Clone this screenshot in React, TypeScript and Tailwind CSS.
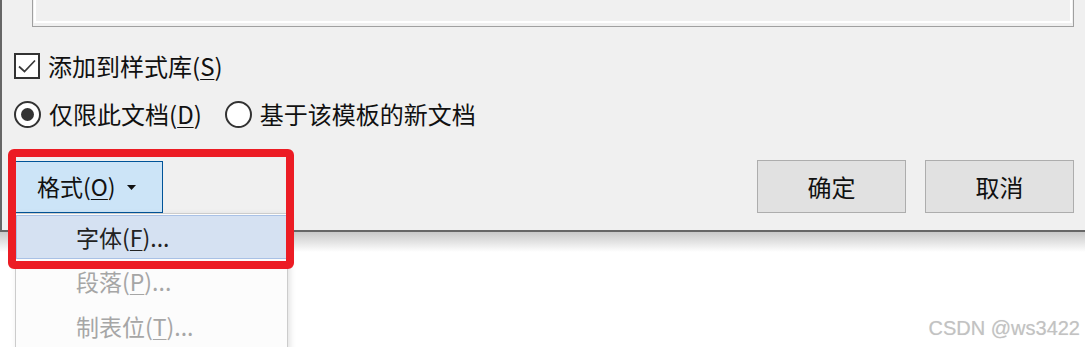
import React from "react";

const FONT = "font-['Noto_Sans_CJK_SC','Noto_Sans',sans-serif]";

function Mn({ c }: { c: string }) {
  return <span className="underline underline-offset-[3px] decoration-1">{c}</span>;
}

function CheckBox() {
  return (
    <span className="w-[26px] h-[26px] border-2 border-[#333333] bg-white flex items-center justify-center">
      <svg width="20" height="16" viewBox="0 0 20 16">
        <path d="M2 8.5 L7.5 13.5 L18 2.5" fill="none" stroke="#3a3a3a" strokeWidth="1.7" />
      </svg>
    </span>
  );
}

function Radio({ on }: { on?: boolean }) {
  return (
    <span className="w-[27px] h-[27px] rounded-full border-2 border-[#333333] bg-white flex items-center justify-center">
      {on && <span className="w-[13px] h-[13px] rounded-full bg-[#333333]" />}
    </span>
  );
}

export default function App() {
  return (
    <div className={`relative w-[1085px] h-[347px] overflow-hidden bg-white text-[#111] ${FONT}`}>
      {/* dialog */}
      <div className="h-[232px] bg-[#f0f0f0] border-l-[2px] border-b-[2px] border-[#666666] flex flex-col">
        <div className="ml-[30px] mr-[11px] h-[27px] border-x border-b border-[#a0a0a0] px-[1px] pb-[3px]">
          <div className="h-full border-x-[2px] border-b-[2px] border-white" />
        </div>

        <div className="mt-[25px] ml-[12px] h-[28px] flex items-center gap-[8px] text-[24px] leading-none">
          <CheckBox />
          <span>
            添加到样式库(<Mn c="S" />)
          </span>
        </div>

        <div className="mt-[20px] ml-[12px] h-[28px] flex items-center text-[24px] leading-none">
          <Radio on />
          <span className="ml-[8px]">
            仅限此文档(<Mn c="D" />)
          </span>
          <span className="ml-[23px]">
            <Radio />
          </span>
          <span className="ml-[8px]">基于该模板的新文档</span>
        </div>

        <div className="mt-[32px] ml-[13px] mr-[11px] flex items-center">
          <div className="w-[148px] h-[52px] bg-[#cce4f7] border border-[#005499] flex items-center pl-[21px] text-[23px] leading-none">
            <span>
              格式(<Mn c="O" />)
            </span>
            <svg className="ml-[11px] mt-[2px]" width="9" height="6" viewBox="0 0 9 6">
              <path d="M0 0 H9 L4.5 5 Z" fill="#111" />
            </svg>
          </div>
          <div className="ml-auto flex gap-[19px]">
            <button className="w-[149px] h-[53px] bg-[#e1e1e1] border border-[#adadad] text-[24px] leading-none">
              确定
            </button>
            <button className="w-[149px] h-[53px] bg-[#e1e1e1] border border-[#adadad] text-[24px] leading-none">
              取消
            </button>
          </div>
        </div>
      </div>
      <div className="h-[20px] bg-gradient-to-b from-[#c8c8c8] to-white" />

      {/* dropdown menu */}
      <div className="absolute left-[15px] top-[213px] w-[273px] h-[160px] bg-[#fcfcfc] border-x border-t border-[#cccccc] shadow-[2px_2px_6px_rgba(0,0,0,0.12)] pt-[1px] text-[23px] leading-none">
        <div className="h-[44px] bg-[#d5e1f2] border border-[#a9c1e6] flex items-center pl-[59px] text-[#222]">
          字体(<Mn c="F" />)...
        </div>
        <div className="h-[45px] flex items-center pl-[60px] text-[#a6a6a6]">
          段落(<Mn c="P" />)...
        </div>
        <div className="h-[44px] flex items-center pl-[60px] text-[#a6a6a6]">
          制表位(<Mn c="T" />)...
        </div>
      </div>

      {/* annotation */}
      <div className="absolute left-[8px] top-[149px] w-[286px] h-[120px] border-[8px] border-[#ec1c24] rounded-[6px]" />

      <div className="absolute right-[5px] top-[318px] font-['Liberation_Sans',sans-serif] text-[20px] leading-none text-[#c2c2c2] [text-shadow:0_0_1px_rgba(0,0,0,0.12)]">
        CSDN @ws3422
      </div>
    </div>
  );
}
